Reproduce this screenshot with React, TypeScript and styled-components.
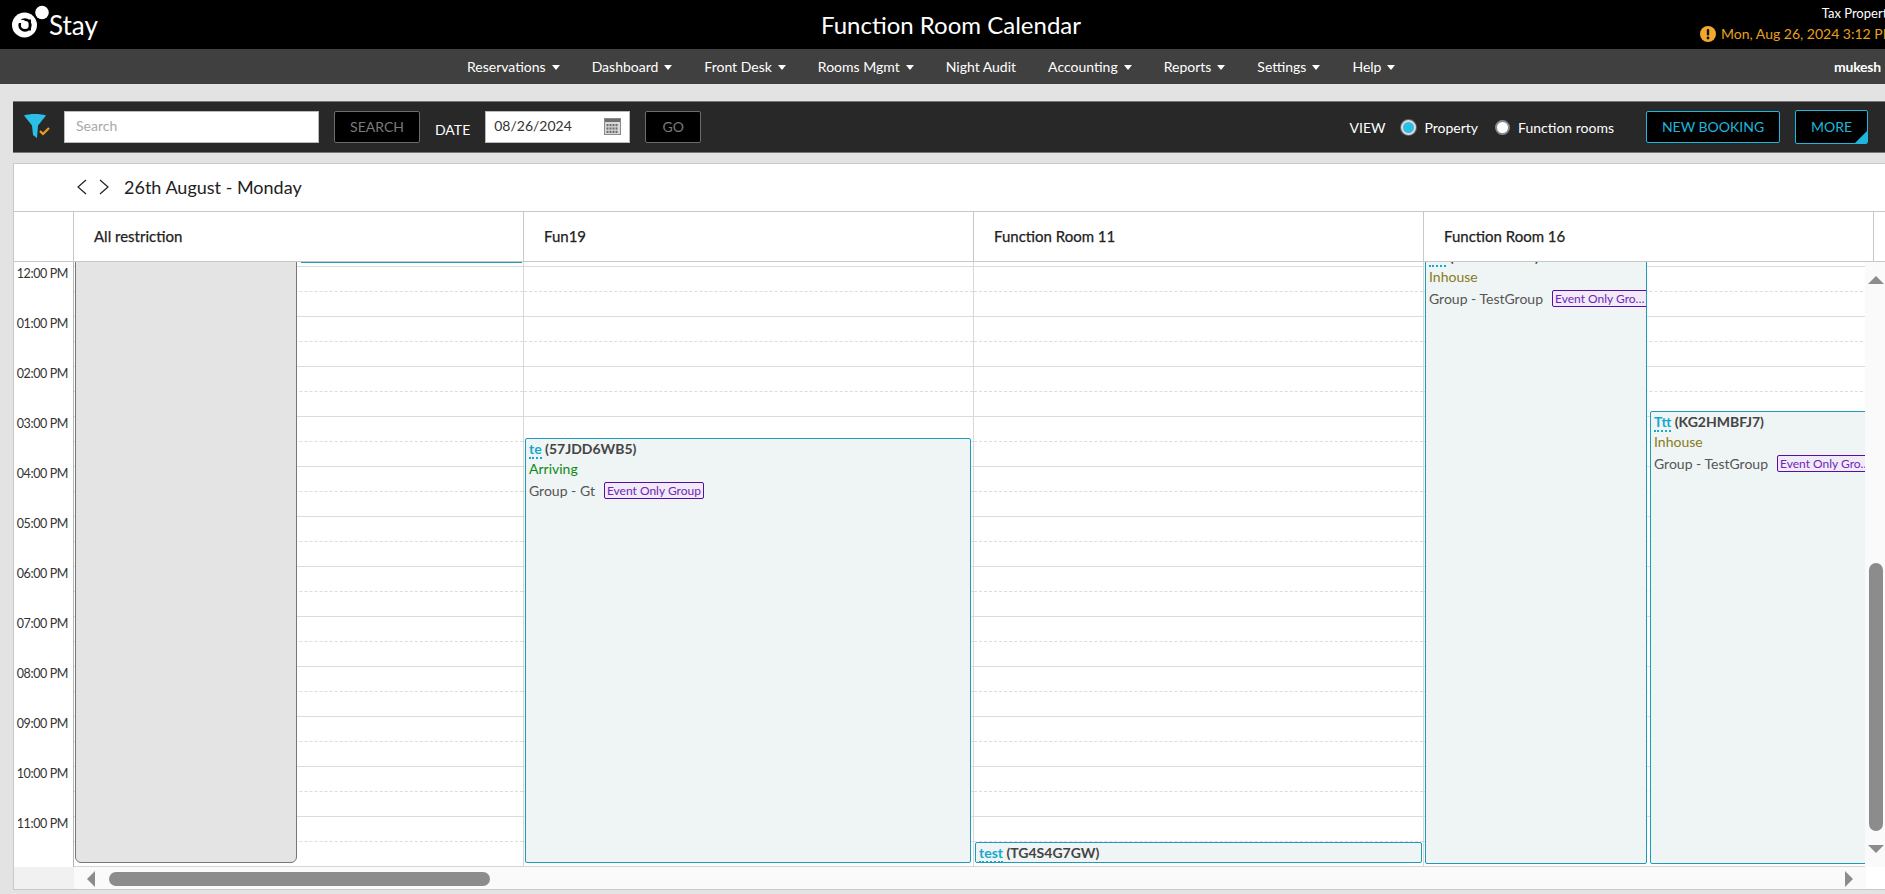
import React from "react";
import styled, { createGlobalStyle } from "styled-components";

const GlobalStyle = createGlobalStyle`
  html, body {
    margin: 0;
    padding: 0;
    height: 100%;
    overflow: hidden;
    background: #e3e3e3;
    font-family: Lato, "Open Sans", Arial, sans-serif;
  }
  * { box-sizing: border-box; }
`;

const CYAN = "#1fb5dd";
const COL_WIDTH = 450;

const Page = styled.div`
  width: 1885px;
  height: 894px;
  overflow: hidden;
  background: #e3e3e3;
`;

const TopBar = styled.header`
  height: 49px;
  background: #000;
  display: grid;
  grid-template-columns: 1fr auto 1fr;
  align-items: center;
  overflow: hidden;
`;

const Brand = styled.div`
  display: flex;
  align-items: flex-start;
  padding-left: 12px;
  height: 49px;
`;

const BrandName = styled.span`
  color: #fff;
  font-size: 26px;
  line-height: 30px;
  margin: 10px 0 0 -1px;
`;

const PageTitle = styled.h1`
  margin: 0 0 0 17px;
  color: #fff;
  font-size: 24px;
  font-weight: 400;
  line-height: 49px;
`;

const PropertyInfo = styled.div`
  justify-self: end;
  width: 208px;
  margin-right: -23px;
  white-space: nowrap;
`;

const PropertyName = styled.div`
  color: #fff;
  font-size: 13px;
  line-height: 17px;
  text-align: right;
  margin-right: 14px;
`;

const ClockLine = styled.div`
  display: flex;
  align-items: center;
  gap: 5px;
  color: #e8a01c;
  font-size: 14px;
  line-height: 20px;
  margin-top: 2px;
`;

const NavBar = styled.nav`
  height: 35px;
  background: #404040;
  display: flex;
  align-items: center;
  gap: 32px;
  padding-left: 467px;
`;

const NavItem = styled.a`
  color: #fff;
  font-size: 14px;
  display: flex;
  align-items: center;
  gap: 6px;
  white-space: nowrap;
`;

const Caret = styled.span`
  width: 0;
  height: 0;
  border-left: 4px solid transparent;
  border-right: 4px solid transparent;
  border-top: 5px solid #fff;
  margin-top: 2px;
`;

const UserName = styled.span`
  margin-left: auto;
  margin-right: 4px;
  color: #fff;
  font-size: 14px;
  font-weight: 700;
  letter-spacing: -0.2px;
`;

const Toolbar = styled.section`
  margin: 17px 0 10px 13px;
  height: 52px;
  background: #282828;
  border-top: 1px solid #777;
  border-bottom: 1px solid #777;
  display: flex;
  align-items: center;
  padding-left: 11px;
`;

const FilterIcon = styled.svg`
  width: 26px;
  height: 26px;
  margin-right: 14px;
  flex: none;
`;

const SearchInput = styled.div`
  width: 255px;
  height: 32px;
  background: #fff;
  border: 1px solid #bbb;
  color: #a9a9a9;
  font-size: 14px;
  line-height: 28px;
  padding-left: 11px;
`;

const ToolButton = styled.button<{ $ml?: number; $width: number; $active?: boolean }>`
  width: ${(p) => p.$width}px;
  height: 32px;
  margin-left: ${(p) => p.$ml ?? 0}px;
  background: #000;
  border: 1px solid ${(p) => (p.$active ? CYAN : "#6c6c6c")};
  border-radius: 2px;
  color: ${(p) => (p.$active ? CYAN : "#7a7a7a")};
  font-family: inherit;
  font-size: 14px;
  padding: 0 0 2px;
  flex: none;
`;

const MoreButton = styled(ToolButton)`
  position: relative;
  height: 34px;
  overflow: hidden;
  &::after {
    content: "";
    position: absolute;
    right: 0;
    bottom: 0;
    width: 0;
    height: 0;
    border-left: 12px solid transparent;
    border-bottom: 12px solid ${CYAN};
  }
`;

const ToolLabel = styled.span<{ $ml: number }>`
  color: #fff;
  font-size: 14px;
  margin-left: ${(p) => p.$ml}px;
`;

const DateLabel = styled(ToolLabel)`
  margin-top: 4px;
`;

const DateInput = styled.div`
  width: 145px;
  height: 32px;
  margin-left: 15px;
  background: #fff;
  border: 1px solid #bbb;
  color: #333;
  font-size: 14px;
  line-height: 28px;
  padding: 0 8px;
  display: flex;
  justify-content: space-between;
`;

const CalendarIcon = styled.svg`
  width: 17px;
  height: 17px;
  margin-top: 6px;
  flex: none;
`;

const ViewGroup = styled.div`
  margin-left: auto;
  display: flex;
  align-items: center;
  margin-right: 17px;
`;

const Radio = styled.span<{ $checked?: boolean; $ml: number }>`
  width: 15px;
  height: 15px;
  border-radius: 50%;
  margin-left: ${(p) => p.$ml}px;
  background: ${(p) => (p.$checked ? "#2bbfe8" : "#fff")};
  border: 2px solid ${(p) => (p.$checked ? "#dcdcdc" : "#8a8a8a")};
  box-shadow: ${(p) => (p.$checked ? "0 0 0 1px #666" : "none")};
  flex: none;
`;

const RadioText = styled.span`
  color: #fff;
  font-size: 14px;
  margin-left: 8px;
`;

const CalendarPanel = styled.section`
  margin-left: 13px;
  height: 727px;
  background: #fff;
  border-top: 1px solid #c8c8c8;
  border-left: 1px solid #c8c8c8;
  border-bottom: 1px solid #c8c8c8;
  overflow: hidden;
`;

const DateRow = styled.div`
  height: 47px;
  display: flex;
  align-items: center;
  padding: 0 0 2px 62px;
  color: #222;
`;

const Chevron = styled.svg`
  width: 11px;
  height: 16px;
  margin-right: 12px;
  flex: none;
`;

const DateTitle = styled.span`
  font-size: 18px;
  margin-left: 2px;
`;

const HeadRow = styled.div`
  height: 51px;
  display: flex;
  border-top: 1px solid #c8c8c8;
  border-bottom: 1px solid #c8c8c8;
`;

const HeadCorner = styled.div`
  width: 60px;
  flex: none;
  border-right: 1px solid #c8c8c8;
`;

const HeadCell = styled.div`
  width: ${COL_WIDTH}px;
  flex: none;
  border-right: 1px solid #c8c8c8;
  padding-left: 20px;
  color: #222;
  font-size: 15px;
  line-height: 49px;
  -webkit-text-stroke: 0.25px #222;
`;

const Body = styled.div`
  height: 605px;
  display: flex;
`;

const TimeColumn = styled.div`
  width: 60px;
  flex: none;
  padding-top: 5px;
  background: #fff;
  border-right: 1px solid #b5b5b5;
`;

const TimeLabel = styled.div`
  height: 50px;
  color: #333;
  font-size: 12.5px;
  line-height: 14px;
  letter-spacing: -0.4px;
  text-align: right;
  padding-right: 5px;
`;

const Viewport = styled.div`
  width: 1791px;
  flex: none;
  display: flex;
  overflow: hidden;
  border-bottom: 1px solid #d5d5d5;
`;

const Column = styled.div`
  position: relative;
  width: ${COL_WIDTH}px;
  flex: none;
  padding-top: 4px;
  border-right: 1px solid #d8d8d8;
`;

const Slot = styled.div<{ $half: boolean }>`
  height: 25px;
  border-top: 1px ${(p) => (p.$half ? "dashed" : "solid")} #dcdcdc;
`;

const RestrictionBlock = styled.div`
  position: absolute;
  left: 1px;
  top: -4px;
  bottom: 3px;
  width: 222px;
  background: #e4e4e4;
  border: 1px solid #777;
  border-radius: 0 0 6px 6px;
`;

const ClippedEventEdge = styled.div`
  position: absolute;
  left: 227px;
  top: -1px;
  width: 221px;
  height: 2px;
  background: #1e9bb8;
`;

const EventCard = styled.div<{ $left: number; $width: number; $top: number; $bottom?: number }>`
  position: absolute;
  left: ${(p) => p.$left}px;
  width: ${(p) => p.$width}px;
  top: ${(p) => p.$top}px;
  bottom: ${(p) => p.$bottom ?? 3}px;
  padding: 0 3px;
  background: #eff4f4;
  border: 1px solid #1e9bb8;
  border-radius: 2px;
  overflow: hidden;
  font-size: 14px;
`;

const EventHead = styled.div`
  height: 20px;
  line-height: 19px;
  font-weight: 700;
  color: #444;
  white-space: nowrap;
`;

const EventName = styled.span`
  color: #14a9cf;
  border-bottom: 2px dotted #14a9cf;
`;

const EventStatus = styled.div<{ $inhouse?: boolean }>`
  height: 21px;
  line-height: 20px;
  color: ${(p) => (p.$inhouse ? "#8a7a1c" : "#0c8a14")};
`;

const EventGroup = styled.div`
  display: flex;
  align-items: center;
  height: 21px;
  color: #555;
  white-space: nowrap;
`;

const GroupBadge = styled.span<{ $width?: number }>`
  flex: none;
  margin-left: 9px;
  height: 17px;
  width: ${(p) => (p.$width ? `${p.$width}px` : "auto")};
  padding: 0 2px;
  font-size: 12px;
  line-height: 15px;
  color: #6f25b8;
  background: #f1eaf7;
  border: 1px solid #5a0ba8;
  border-radius: 2px;
  overflow: hidden;
  text-overflow: ellipsis;
  white-space: nowrap;
`;

const VScroll = styled.div`
  width: 20px;
  flex: none;
  background: #fafafa;
  display: flex;
  flex-direction: column;
  align-items: center;
  padding-top: 14px;
  padding-left: 2px;
`;

const VThumb = styled.div`
  width: 14px;
  height: 268px;
  margin: 279px 0 14px;
  background: #8c8c8c;
  border-radius: 7px;
`;

const ArrowV = styled.span<{ $up?: boolean }>`
  width: 0;
  height: 0;
  border-left: 8px solid transparent;
  border-right: 8px solid transparent;
  ${(p) => (p.$up ? "border-bottom: 8px solid #8c8c8c;" : "border-top: 8px solid #8c8c8c;")}
`;

const HScroll = styled.div`
  height: 23px;
  display: flex;
  align-items: center;
`;

const HCorner = styled.div`
  width: 60px;
  height: 100%;
  flex: none;
  background: #f1f1f1;
`;

const HTrack = styled.div`
  width: 1792px;
  height: 100%;
  flex: none;
  display: flex;
  align-items: center;
  padding-left: 13px;
  background: #fafafa;
`;

const ArrowH = styled.span<{ $left?: boolean }>`
  width: 0;
  height: 0;
  border-top: 8px solid transparent;
  border-bottom: 8px solid transparent;
  ${(p) => (p.$left ? "border-right: 8px solid #8c8c8c;" : "border-left: 8px solid #8c8c8c; margin-left: auto; margin-right: 13px;")}
`;

const HThumb = styled.div`
  width: 381px;
  height: 14px;
  margin-left: 14px;
  background: #8c8c8c;
  border-radius: 7px;
`;

const NAV_ITEMS: [string, boolean][] = [
  ["Reservations", true],
  ["Dashboard", true],
  ["Front Desk", true],
  ["Rooms Mgmt", true],
  ["Night Audit", false],
  ["Accounting", true],
  ["Reports", true],
  ["Settings", true],
  ["Help", true],
];

const HOURS = [
  "12:00 PM", "01:00 PM", "02:00 PM", "03:00 PM", "04:00 PM", "05:00 PM",
  "06:00 PM", "07:00 PM", "08:00 PM", "09:00 PM", "10:00 PM", "11:00 PM",
];

const slots = Array.from({ length: 24 }, (_, i) => i);

function Slots() {
  return (
    <>
      {slots.map((i) => (
        <Slot key={i} $half={i % 2 === 1} />
      ))}
    </>
  );
}

function Logo() {
  return (
    <svg width="38" height="36" viewBox="0 0 38 36" style={{ marginTop: 5, flex: "none" }}>
      <circle cx="12.5" cy="20" r="12.5" fill="#fff" />
      <circle cx="30" cy="7.5" r="6.8" fill="#fff" />
      <circle cx="13" cy="20" r="5.4" fill="none" stroke="#000" strokeWidth="2.6" />
      <rect x="5.5" y="15" width="7" height="3" fill="#fff" />
      <rect x="16.6" y="14.5" width="2.4" height="11" fill="#000" />
    </svg>
  );
}

function CalendarGlyph() {
  return (
    <CalendarIcon viewBox="0 0 17 17">
      <rect x="0.5" y="0.5" width="16" height="16" fill="#d8d8d8" stroke="#8a8a8a" />
      <rect x="1" y="1" width="15" height="3" fill="#6d6d6d" />
      {[0, 1, 2].map((r) =>
        [0, 1, 2, 3].map((c) => (
          <rect key={`${r}-${c}`} x={2.5 + c * 3} y={6 + r * 3.4} width="2" height="2.2" fill="#6d6d6d" />
        ))
      )}
    </CalendarIcon>
  );
}

function Badge({ width }: { width?: number }) {
  return <GroupBadge $width={width}>Event Only Group</GroupBadge>;
}

export default function App() {
  return (
    <Page>
      <GlobalStyle />
      <TopBar>
        <Brand>
          <Logo />
          <BrandName>Stay</BrandName>
        </Brand>
        <PageTitle>Function Room Calendar</PageTitle>
        <PropertyInfo>
          <PropertyName>Tax Property</PropertyName>
          <ClockLine>
            <svg width="16" height="16" viewBox="0 0 16 16" style={{ flex: "none" }}>
              <circle cx="8" cy="8" r="8" fill="#f0a92e" />
              <rect x="6.8" y="3" width="2.4" height="6.5" rx="1" fill="#111" />
              <circle cx="8" cy="12" r="1.4" fill="#111" />
            </svg>
            <span>Mon, Aug 26, 2024 3:12 PM</span>
          </ClockLine>
        </PropertyInfo>
      </TopBar>

      <NavBar>
        {NAV_ITEMS.map(([label, hasMenu]) => (
          <NavItem key={label}>
            {label}
            {hasMenu && <Caret />}
          </NavItem>
        ))}
        <UserName>mukesh</UserName>
      </NavBar>

      <Toolbar>
        <FilterIcon viewBox="0 0 26 26">
          <path d="M0 1.5 C5 -0.5 17 -0.5 22 1.5 L14 11.5 L13 24 L9 21 L8 11.5 Z" fill="#2bbfe8" />
          <path d="M16 17 L19 20 L25 14" fill="none" stroke="#e8a01c" strokeWidth="2.2" />
        </FilterIcon>
        <SearchInput>Search</SearchInput>
        <ToolButton $ml={15} $width={86}>SEARCH</ToolButton>
        <DateLabel $ml={15}>DATE</DateLabel>
        <DateInput>
          08/26/2024
          <CalendarGlyph />
        </DateInput>
        <ToolButton $ml={15} $width={56}>GO</ToolButton>
        <ViewGroup>
          <ToolLabel $ml={0}>VIEW</ToolLabel>
          <Radio $checked $ml={16} />
          <RadioText>Property</RadioText>
          <Radio $ml={17} />
          <RadioText>Function rooms</RadioText>
          <ToolButton $ml={32} $width={134} $active>NEW BOOKING</ToolButton>
          <MoreButton $ml={15} $width={73} $active>MORE</MoreButton>
        </ViewGroup>
      </Toolbar>

      <CalendarPanel>
        <DateRow>
          <Chevron viewBox="0 0 11 16">
            <path d="M10 1 L2 8 L10 15" fill="none" stroke="#222" strokeWidth="1.2" />
          </Chevron>
          <Chevron viewBox="0 0 11 16">
            <path d="M1 1 L9 8 L1 15" fill="none" stroke="#222" strokeWidth="1.2" />
          </Chevron>
          <DateTitle>26th August - Monday</DateTitle>
        </DateRow>

        <HeadRow>
          <HeadCorner />
          <HeadCell>All restriction</HeadCell>
          <HeadCell>Fun19</HeadCell>
          <HeadCell>Function Room 11</HeadCell>
          <HeadCell>Function Room 16</HeadCell>
        </HeadRow>

        <Body>
          <TimeColumn>
            {HOURS.map((h) => (
              <TimeLabel key={h}>{h}</TimeLabel>
            ))}
          </TimeColumn>
          <Viewport>
            <Column>
              <Slots />
              <RestrictionBlock />
              <ClippedEventEdge />
            </Column>
            <Column>
              <Slots />
              <EventCard $left={1} $width={446} $top={176}>
                <EventHead>
                  <EventName>te</EventName> (57JDD6WB5)
                </EventHead>
                <EventStatus>Arriving</EventStatus>
                <EventGroup>
                  Group - Gt
                  <Badge />
                </EventGroup>
              </EventCard>
            </Column>
            <Column>
              <Slots />
              <EventCard $left={1} $width={447} $top={580}>
                <EventHead>
                  <EventName>test</EventName> (TG4S4G7GW)
                </EventHead>
              </EventCard>
            </Column>
            <Column>
              <Slots />
              <EventCard $left={1} $width={222} $top={-16} $bottom={2}>
                <EventHead>
                  <EventName>Ttt</EventName> (KG2HMBFJ7)
                </EventHead>
                <EventStatus $inhouse>Inhouse</EventStatus>
                <EventGroup>
                  Group - TestGroup
                  <Badge width={96} />
                </EventGroup>
              </EventCard>
              <EventCard $left={226} $width={222} $top={149} $bottom={2}>
                <EventHead>
                  <EventName>Ttt</EventName> (KG2HMBFJ7)
                </EventHead>
                <EventStatus $inhouse>Inhouse</EventStatus>
                <EventGroup>
                  Group - TestGroup
                  <Badge width={96} />
                </EventGroup>
              </EventCard>
            </Column>
          </Viewport>
          <VScroll>
            <ArrowV $up />
            <VThumb />
            <ArrowV />
          </VScroll>
        </Body>

        <HScroll>
          <HCorner />
          <HTrack>
            <ArrowH $left />
            <HThumb />
            <ArrowH />
          </HTrack>
        </HScroll>
      </CalendarPanel>
    </Page>
  );
}
